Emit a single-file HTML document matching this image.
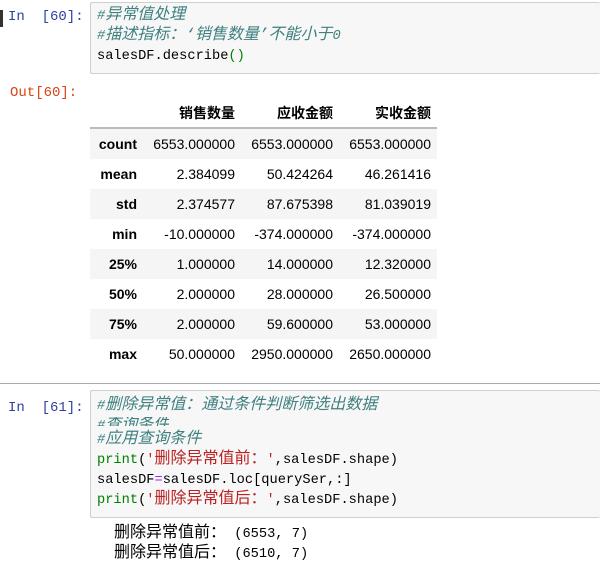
<!DOCTYPE html>
<html><head><meta charset="utf-8"><style>
body{margin:0;width:600px;height:578px;background:#fff;position:relative;overflow:hidden;font-family:"Liberation Mono","Noto Sans CJK SC",monospace;}
.p{position:absolute;font-size:14px;white-space:pre;}
.box{position:absolute;left:90px;right:0;background:#f7f7f7;border:1px solid #cfcfcf;border-right:none;border-radius:2px;}
.code{position:absolute;left:97px;font-size:13.7px;line-height:20px;white-space:pre;color:#000;}
.k{font-size:16px;line-height:16px;}
.c{color:#408080;font-style:italic}
.g{color:#008000}.s{color:#ba2121}.o{color:#aa22ff}
table{position:absolute;left:90px;top:98px;border-collapse:collapse;font-family:"Liberation Sans","Noto Sans CJK SC",sans-serif;font-size:14px;table-layout:fixed;width:347px}
th,td{text-align:right;padding:0 6px;height:30px;}
thead th{border-bottom:2px solid #bbb;height:29px;font-weight:bold}
tbody tr:nth-child(odd){background:#f5f5f5}
tbody th{font-weight:bold}
</style></head><body>
<div style="position:absolute;left:0;top:10px;width:3px;height:17px;background:#333"></div>
<div class="p" style="left:8px;top:9px;color:#303f9f">In  [60]:</div>
<div class="box" style="top:2px;height:70px"></div>
<div class="code" style="top:7px"><span class="c">#<span class="k">异常值处理</span>
#<span class="k">描述指标：‘销售数量’不能小于</span>0</span>
salesDF.describe<span class="g">()</span></div>
<div class="p" style="left:10px;top:85px;color:#d84315">Out[60]:</div>
<table>
<colgroup><col style="width:53px"><col style="width:98px"><col style="width:98px"><col style="width:98px"></colgroup>
<thead><tr><th></th><th>销售数量</th><th>应收金额</th><th>实收金额</th></tr></thead>
<tbody>
<tr><th>count</th><td>6553.000000</td><td>6553.000000</td><td>6553.000000</td></tr>
<tr><th>mean</th><td>2.384099</td><td>50.424264</td><td>46.261416</td></tr>
<tr><th>std</th><td>2.374577</td><td>87.675398</td><td>81.039019</td></tr>
<tr><th>min</th><td>-10.000000</td><td>-374.000000</td><td>-374.000000</td></tr>
<tr><th>25%</th><td>1.000000</td><td>14.000000</td><td>12.320000</td></tr>
<tr><th>50%</th><td>2.000000</td><td>28.000000</td><td>26.500000</td></tr>
<tr><th>75%</th><td>2.000000</td><td>59.600000</td><td>53.000000</td></tr>
<tr><th>max</th><td>50.000000</td><td>2950.000000</td><td>2650.000000</td></tr>
</tbody></table>
<div style="position:absolute;left:0;right:0;top:383px;height:1px;background:#aaa"></div>
<div class="p" style="left:8px;top:400px;color:#303f9f">In  [61]:</div>
<div class="box" style="top:390px;height:126px"></div>
<div class="code" style="top:397px"><span class="c">#<span class="k">删除异常值：通过条件判断筛选出数据</span></span></div>
<div class="code" style="top:417px;height:9px;overflow:hidden"><span class="c">#<span class="k">查询条件</span></span></div>
<div class="code" style="top:431px"><span class="c">#<span class="k">应用查询条件</span></span>
<span class="g">print</span>(<span class="s">'<span class="k">删除异常值前：</span>'</span>,salesDF.shape)
salesDF<span class="o">=</span>salesDF.loc[querySer,:]
<span class="g">print</span>(<span class="s">'<span class="k">删除异常值后：</span>'</span>,salesDF.shape)</div>
<div class="code" style="left:114px;top:525px;line-height:20px"><span class="k">删除异常值前：</span> (6553, 7)
<span class="k">删除异常值后：</span> (6510, 7)</div>
</body></html>
